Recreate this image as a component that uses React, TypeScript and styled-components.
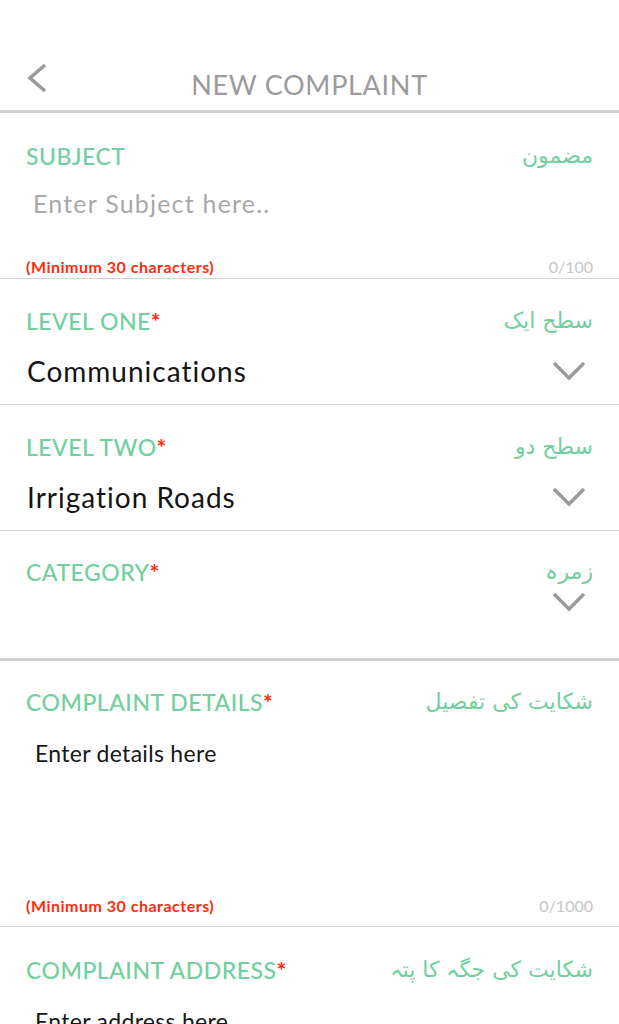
import React from 'react';
import styled, { createGlobalStyle } from 'styled-components';

const GlobalStyle = createGlobalStyle`
    html, body {
        margin: 0;
        padding: 0;
        background: #ffffff;
    }
    * {
        box-sizing: border-box;
    }
`;

const green = '#72cf9e';
const red = '#ff2b0b';

const Page = styled.div`
    width: 619px;
    height: 1024px;
    background: #ffffff;
    font-family: Lato, 'DejaVu Sans', sans-serif;
    overflow: hidden;
`;

const Header = styled.div`
    display: grid;
    grid-template-columns: 1fr auto 1fr;
    align-items: start;
    height: 113px;
    padding-top: 63px;
    border-bottom: 3px solid #cfcfcf;
`;

const BackButton = styled.button`
    justify-self: start;
    margin-left: 25px;
    padding: 0;
    border: none;
    background: none;
    width: 24px;
    height: 30px;
`;

const Title = styled.h1`
    margin: 7px 0 0;
    font-size: 27px;
    font-weight: 400;
    line-height: 30px;
    letter-spacing: 0.7px;
    color: #9b9b9b;
`;

const Section = styled.div<{ $pt: number; $thick?: boolean; $minH?: number }>`
    padding: ${p => p.$pt}px 26px 0;
    min-height: ${p => p.$minH || 0}px;
    border-bottom: ${p => (p.$thick ? '3px solid #d0d0d0' : '1.5px solid #d6d6d6')};
    display: flex;
    flex-direction: column;
`;

const LabelRow = styled.div`
    display: flex;
    justify-content: space-between;
    align-items: flex-start;
    height: 26px;
`;

const Label = styled.span`
    font-size: 23px;
    line-height: 26px;
    font-weight: 500;
    letter-spacing: 0.5px;
    color: ${green};
`;

const Star = styled.span`
    color: ${red};
    font-weight: 700;
`;

const UrduLabel = styled.span`
    font-family: 'DejaVu Sans', sans-serif;
    direction: rtl;
    font-size: 22px;
    line-height: 26px;
    color: ${green};
`;

const RightStack = styled.div`
    display: flex;
    flex-direction: column;
    align-items: flex-end;
    gap: 7px;
`;

const TextInput = styled.input`
    margin: 19px 0 0 7px;
    padding: 0;
    border: none;
    outline: none;
    font-family: inherit;
    font-size: 25px;
    line-height: 30px;
    letter-spacing: 1.2px;
    color: #333;
    background: transparent;
    &::placeholder {
        color: #a9a9a9;
    }
`;

const TextArea = styled.textarea<{ $h: number }>`
    margin: 24px 0 0 9px;
    padding: 0;
    border: none;
    outline: none;
    resize: none;
    font-family: inherit;
    font-size: 23px;
    line-height: 28px;
    letter-spacing: 0.3px;
    height: ${p => p.$h}px;
    color: #111;
    background: transparent;
    &::placeholder {
        color: #161616;
    }
`;

const Footer = styled.div<{ $mt: number; $mb: number }>`
    display: flex;
    justify-content: space-between;
    align-items: center;
    height: 20px;
    margin-top: ${p => p.$mt}px;
    margin-bottom: ${p => p.$mb}px;
`;

const Hint = styled.span`
    font-size: 16px;
    font-weight: 700;
    letter-spacing: 0.5px;
    color: ${red};
`;

const Counter = styled.span`
    font-size: 16px;
    color: #c6c6c6;
`;

const ValueRow = styled.div`
    display: flex;
    justify-content: space-between;
    align-items: center;
    margin-top: 19px;
    height: 36px;
`;

const Value = styled.span`
    padding-left: 1px;
    font-size: 28px;
    line-height: 36px;
    letter-spacing: 1px;
    color: #141414;
`;

const Chevron = () => (
    <svg width="34" height="20" viewBox="0 0 34 20" style={{ marginRight: 7 }}>
        <path d="M2 2 L17 17 L32 2" fill="none" stroke="#9a9a9a" strokeWidth="3.4" />
    </svg>
);

const BackIcon = () => (
    <svg width="22" height="30" viewBox="0 0 22 30">
        <path d="M19 2 L4 15 L19 28" fill="none" stroke="#9a9a9a" strokeWidth="3.6" />
    </svg>
);

type FieldLabelProps = { text: string; urdu: string; required?: boolean };

const FieldLabel = ({ text, urdu, required }: FieldLabelProps) => (
    <LabelRow>
        <Label>
            {text}
            {required && <Star>*</Star>}
        </Label>
        <UrduLabel>{urdu}</UrduLabel>
    </LabelRow>
);

const selects = [
    { text: 'LEVEL ONE', urdu: 'سطح ایک', value: 'Communications' },
    { text: 'LEVEL TWO', urdu: 'سطح دو', value: 'Irrigation Roads' }
];

export default function App() {
    return (
        <Page>
            <GlobalStyle />
            <Header>
                <BackButton>
                    <BackIcon />
                </BackButton>
                <Title>NEW COMPLAINT</Title>
                <span />
            </Header>

            <Section $pt={30}>
                <FieldLabel text="SUBJECT" urdu="مضمون" />
                <TextInput placeholder="Enter Subject here.." />
                <Footer $mt={38} $mb={2}>
                    <Hint>(Minimum 30 characters)</Hint>
                    <Counter>0/100</Counter>
                </Footer>
            </Section>

            {selects.map(s => (
                <Section key={s.text} $pt={29} $minH={126}>
                    <FieldLabel text={s.text} urdu={s.urdu} required />
                    <ValueRow>
                        <Value>{s.value}</Value>
                        <Chevron />
                    </ValueRow>
                </Section>
            ))}

            <Section $pt={28} $minH={130} $thick>
                <LabelRow>
                    <Label>
                        CATEGORY<Star>*</Star>
                    </Label>
                    <RightStack>
                        <UrduLabel>زمرہ</UrduLabel>
                        <Chevron />
                    </RightStack>
                </LabelRow>
            </Section>

            <Section $pt={28}>
                <FieldLabel text="COMPLAINT DETAILS" urdu="شکایت کی تفصیل" required />
                <TextArea $h={152} placeholder="Enter details here" />
                <Footer $mt={4} $mb={11}>
                    <Hint>(Minimum 30 characters)</Hint>
                    <Counter>0/1000</Counter>
                </Footer>
            </Section>

            <Section $pt={30}>
                <FieldLabel text="COMPLAINT ADDRESS" urdu="شکایت کی جگہ کا پتہ" required />
                <TextArea $h={80} placeholder="Enter address here" />
            </Section>
        </Page>
    );
}
